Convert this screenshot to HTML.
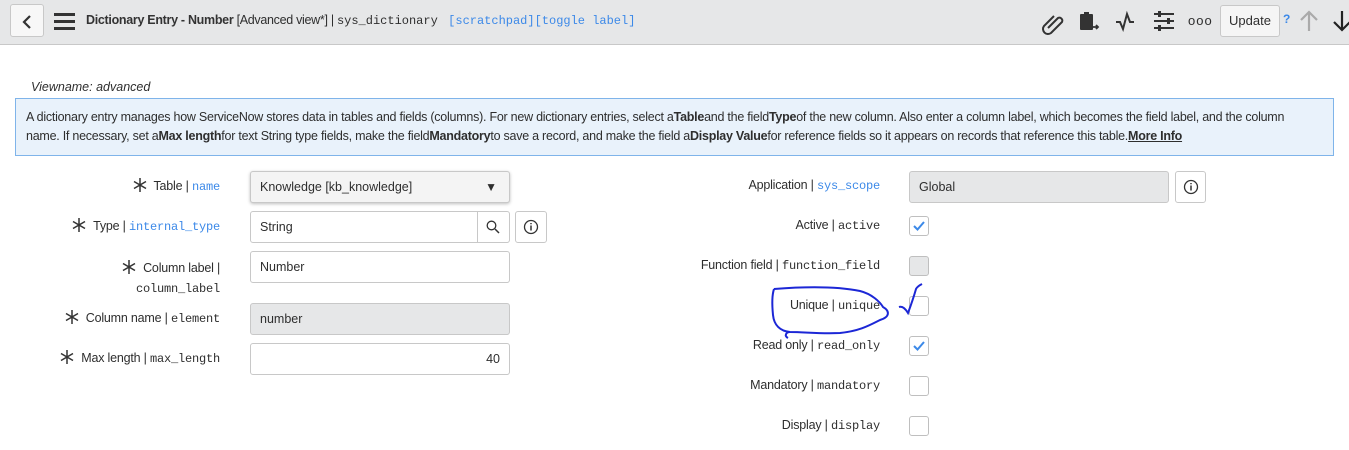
<!DOCTYPE html>
<html><head><meta charset="utf-8"><style>
*{box-sizing:border-box;margin:0;padding:0}
body{width:1349px;height:450px;overflow:hidden;background:#fff;font-family:"Liberation Sans",sans-serif;color:#2e2e2e;font-size:13px;position:relative}
.hdr{position:absolute;left:0;top:0;width:1349px;height:45px;background:#e6e7e8;border-bottom:1px solid #c8c8c8}
.abs{position:absolute}
.mono{font-family:"Liberation Mono",monospace;font-size:12px}
.blue{color:#3c89e8}
.btn{position:absolute;border:1px solid #c8c8c8;border-radius:3px;background:#f5f5f5}
.lbl{position:absolute;text-align:right;white-space:nowrap;font-size:12.5px;letter-spacing:-0.2px}
.inp{position:absolute;border:1px solid #c8c8c8;border-radius:3px;background:#fff;height:32px;padding:0 9px;line-height:30px;font-size:12.5px}
.cb{position:absolute;width:20px;height:20px;border:1px solid #bfbfbf;border-radius:3px;background:#fff}
.star{display:inline-block;width:14px;height:14px;vertical-align:-2px;margin-right:7px}
</style></head><body>
<svg width="0" height="0" style="position:absolute"><defs><symbol id="st" viewBox="0 0 14 14"><path d="M7 0v14M1 3.5l12 7M1 10.5l12-7" stroke="#333" stroke-width="1.5"/></symbol></defs></svg>
<div class="hdr">
 <div class="btn" style="left:10px;top:4px;width:34px;height:33px;background:#f7f7f7"><svg width="34" height="33"><path d="M19 11l-6 6 6 6" stroke="#333" stroke-width="2.2" fill="none"/></svg></div>
 <svg class="abs" style="left:54px;top:12px" width="22" height="18"><rect y="1" width="21" height="3" fill="#333"/><rect y="8" width="21" height="3" fill="#333"/><rect y="15" width="21" height="3" fill="#333"/></svg>
 <div class="abs" style="left:86px;top:13px;font-size:12.5px;white-space:nowrap;letter-spacing:-0.3px"><b style="font-weight:600;color:#333">Dictionary Entry - Number</b> [Advanced view*] | <span class="mono" style="letter-spacing:0">sys_dictionary</span> <span class="mono blue" style="letter-spacing:0">&nbsp;[scratchpad][toggle label]</span></div>
 <svg class="abs" style="left:1040px;top:8px" width="30" height="28"><path d="M8 20l10-10a3 3 0 0 1 4 4l-11 11a5 5 0 0 1-7-7l10-10" stroke="#333" stroke-width="2" fill="none"/></svg>
 <svg class="abs" style="left:1078px;top:10px" width="24" height="24"><rect x="2" y="4" width="13" height="16" fill="#333" rx="1"/><rect x="6" y="2" width="5" height="4" fill="#333"/><path d="M14 17h6m-2-2l2 2-2 2" stroke="#333" stroke-width="1.8" fill="none"/></svg>
 <svg class="abs" style="left:1114px;top:10px" width="24" height="22"><path d="M2 12h4l3 7 4-15 3 8h4" stroke="#333" stroke-width="2" fill="none"/></svg>
 <svg class="abs" style="left:1152px;top:10px" width="24" height="22"><path d="M2 4h20M2 11h20M2 18h20" stroke="#333" stroke-width="2"/><rect x="6" y="1" width="3" height="6" fill="#333"/><rect x="15" y="8" width="3" height="6" fill="#333"/><rect x="6" y="15" width="3" height="6" fill="#333"/></svg>
 <div class="abs" style="left:1188px;top:13px;font-size:13px;letter-spacing:1px">ooo</div>
 <div class="btn" style="left:1220px;top:5px;width:60px;height:32px;line-height:30px;text-align:center;font-size:13px">Update</div>
 <div class="abs" style="left:1283px;top:12px;color:#3c89e8;font-weight:bold;font-size:12px">?</div>
 <svg class="abs" style="left:1298px;top:9px" width="22" height="24"><path d="M11 22V3M3 11l8-8 8 8" stroke="#aaa" stroke-width="2.2" fill="none"/></svg>
 <svg class="abs" style="left:1333px;top:9px" width="16" height="24"><path d="M9 2v19M1 13l8 8 8-8" stroke="#222" stroke-width="2.2" fill="none"/></svg>
</div>
<div class="abs" style="left:31px;top:80px;font-style:italic;font-size:12.5px">Viewname: advanced</div>
<div class="abs" style="left:15px;top:98px;width:1319px;height:58px;background:#e9f2fb;border:1px solid #7fb4ea;padding:9px 10px;font-size:12.5px;line-height:19px;white-space:nowrap;letter-spacing:-0.25px">A dictionary entry manages how ServiceNow stores data in tables and fields (columns). For new dictionary entries, select a<b>Table</b>and the field<b>Type</b>of the new column. Also enter a column label, which becomes the field label, and the column<br>name. If necessary, set a<b>Max length</b>for text String type fields, make the field<b>Mandatory</b>to save a record, and make the field a<b>Display Value</b>for reference fields so it appears on records that reference this table.<u><b style="font-weight:600">More Info</b></u></div>

<div class="lbl" style="right:1129px;top:178px"><svg class="star"><use href="#st"/></svg>Table | <span class="mono blue">name</span></div>
<div class="lbl" style="right:1129px;top:218px"><svg class="star"><use href="#st"/></svg>Type | <span class="mono blue">internal_type</span></div>
<div class="lbl" style="right:1129px;top:258px;line-height:20px"><svg class="star"><use href="#st"/></svg>Column label |<br><span class="mono">column_label</span></div>
<div class="lbl" style="right:1129px;top:310px"><svg class="star"><use href="#st"/></svg>Column name | <span class="mono">element</span></div>
<div class="lbl" style="right:1129px;top:350px"><svg class="star"><use href="#st"/></svg>Max length | <span class="mono">max_length</span></div>

<div class="inp" style="left:250px;top:171px;width:260px;background:#f4f4f4;box-shadow:0 1px 3px rgba(0,0,0,.25)">Knowledge [kb_knowledge]<span style="position:absolute;right:12px;top:0;font-size:12px">▼</span></div>
<div class="inp" style="left:250px;top:211px;width:260px">String<div style="position:absolute;left:226px;top:0;width:1px;height:30px;background:#c8c8c8"></div><svg style="position:absolute;left:235px;top:8px" width="14" height="14"><circle cx="5.5" cy="5.5" r="4.3" stroke="#333" stroke-width="1.3" fill="none"/><path d="M9 9l4 4" stroke="#333" stroke-width="1.5"/></svg></div>
<div class="btn" style="left:515px;top:211px;width:32px;height:32px;background:#fff"><svg width="30" height="30"><circle cx="15" cy="15" r="6.5" stroke="#333" stroke-width="1.3" fill="none"/><path d="M15 13.5v5M15 11v1.2" stroke="#333" stroke-width="1.5"/></svg></div>
<div class="inp" style="left:250px;top:251px;width:260px">Number</div>
<div class="inp" style="left:250px;top:303px;width:260px;background:#e6e7e8">number</div>
<div class="inp" style="left:250px;top:343px;width:260px;text-align:right">40</div>

<div class="lbl" style="right:469px;top:178px">Application | <span class="mono blue">sys_scope</span></div>
<div class="lbl" style="right:469px;top:218px">Active | <span class="mono">active</span></div>
<div class="lbl" style="right:469px;top:258px">Function field | <span class="mono">function_field</span></div>
<div class="lbl" style="right:469px;top:298px">Unique | <span class="mono">unique</span></div>
<div class="lbl" style="right:469px;top:338px">Read only | <span class="mono">read_only</span></div>
<div class="lbl" style="right:469px;top:378px">Mandatory | <span class="mono">mandatory</span></div>
<div class="lbl" style="right:469px;top:418px">Display | <span class="mono">display</span></div>

<div class="inp" style="left:909px;top:171px;width:260px;background:#e6e7e8">Global</div>
<div class="btn" style="left:1175px;top:171px;width:31px;height:32px;background:#fff"><svg width="30" height="30"><circle cx="15" cy="15" r="6.5" stroke="#333" stroke-width="1.3" fill="none"/><path d="M15 13.5v5M15 11v1.2" stroke="#333" stroke-width="1.5"/></svg></div>
<div class="cb" style="left:909px;top:216px"><svg width="18" height="18"><path d="M4 9l3.5 3.5L14 5" stroke="#3c89e8" stroke-width="2" fill="none"/></svg></div>
<div class="cb" style="left:909px;top:256px;background:#e6e7e8"></div>
<div class="cb" style="left:909px;top:296px"></div>
<div class="cb" style="left:909px;top:336px"><svg width="18" height="18"><path d="M4 9l3.5 3.5L14 5" stroke="#3c89e8" stroke-width="2" fill="none"/></svg></div>
<div class="cb" style="left:909px;top:376px"></div>
<div class="cb" style="left:909px;top:416px"></div>
<svg class="abs" style="left:760px;top:280px" width="190" height="62"><path d="M14 9C40 7 75 6 100 11C112 14 120 22 123 27C130 31 130 37 120 40C110 45 100 51 80 53C60 54 45 52 30 52C20 51 14 45 13 35C12 25 12 15 14 9M30 52c-4 0-6 4-2 6" stroke="#1c27d6" stroke-width="2" fill="none"/><path d="M139 27c3-1 6 1 9 6 3-8 6-17 8-24 1-2 4-4 6-5" stroke="#1c27d6" stroke-width="2" fill="none"/></svg>
</body></html>
